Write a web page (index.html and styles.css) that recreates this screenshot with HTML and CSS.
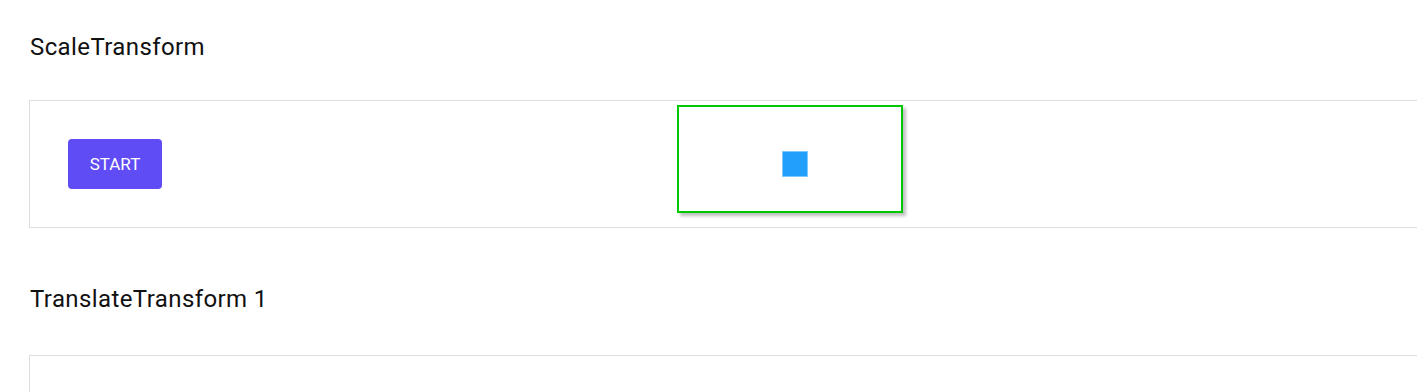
FILE: index.html
```html
<!DOCTYPE html>
<html>
<head>
    <title>Transforms</title>
    <link rel="stylesheet" href="styles.css">
</head>
<body>
    <div class="section">
        <h2 class="title">ScaleTransform</h2>
        <div class="panel">
            <button class="btn">START</button>
            <div class="stage">
                <div class="square"></div>
            </div>
        </div>
    </div>
    <div class="section">
        <h2 class="title">TranslateTransform 1</h2>
        <div class="panel"></div>
    </div>
</body>
</html>
```
FILE: styles.css
```css
html { overflow: hidden; }
body {
    margin: 0; padding: 33px 0 0 29px;
    font-family: Roboto, "Liberation Sans", sans-serif;
    background: #fff; color: #111;
}
.section + .section { margin-top: 57px; }
.title {
    margin: 0 0 39px 1px;
    font-size: 24px; font-weight: normal; line-height: 28px;
    letter-spacing: 0.4px;
}
.section + .section .title { margin-bottom: 42px; }
.panel {
    display: flex; align-items: center;
    width: 1500px; height: 126px;
    border: 1px solid #dedede;
}
.btn {
    margin-left: 38px;
    width: 94px; height: 50px;
    background-color: #604cf5; color: #fff;
    border: 0; border-radius: 4px;
    font-family: Roboto, sans-serif; font-size: 17px;
    cursor: pointer;
}
.stage {
    align-self: flex-start;
    margin: 4px 0 0 515px;
    padding: 44px 93px 34px 103px;
    border: 2px solid #00c800;
    box-shadow: 3px 3px 3px rgba(0, 0, 0, 0.25);
}
.square {
    width: 24px; height: 24px;
    background: #229ffd;
    border: 1px solid #7cc8ff;
}
```
